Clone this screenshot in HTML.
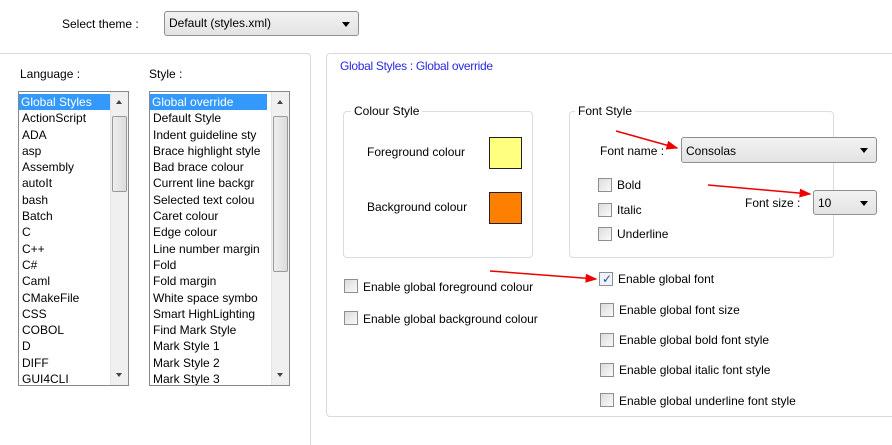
<!DOCTYPE html>
<html style="width:892px;height:445px;overflow:hidden"><head><style>
*{margin:0;padding:0;box-sizing:border-box}
body{width:892px;height:445px;background:#fff;font-family:"Liberation Sans",sans-serif;font-size:12px;color:#000;position:relative;overflow:hidden}
.a{position:absolute;white-space:nowrap}
.combo{position:absolute;border:1px solid #8e8f8f;border-radius:3px;background:linear-gradient(#f2f2f2,#e3e3e3);padding:4px 4px 0 4px}
.combo:after{content:"";position:absolute;right:8px;top:50%;margin-top:-2px;border-left:4px solid transparent;border-right:4px solid transparent;border-top:5px solid #000}
.list{position:absolute;border:1px solid #828790;background:#fff;overflow:hidden;padding-top:2px}
.list .it{height:16.3px;line-height:16px;padding-left:3px}
.sel{background:#3399ff;color:#fff}
.sb{position:absolute;right:0;top:0;bottom:0;width:18px;background:#f0f0f0;border-left:1px solid #e4e4e4}
.thumb{position:absolute;left:1px;right:1px;border:1px solid #9a9a9a;border-radius:2px;background:linear-gradient(90deg,#eee,#dcdcdc)}
.arr{position:absolute;left:5px;width:0;height:0;border-left:3px solid transparent;border-right:3px solid transparent}
.grp{position:absolute;border:1px solid #d5dfe5;border-radius:4px}
.cb{position:absolute;width:14px;height:14px;border:1px solid #8f8f8f;background:linear-gradient(135deg,#dcdcdc,#fafafa)}
.legend{position:absolute;background:#fff;padding:0 3px}
</style></head><body>
<div class="a" style="left:62px;top:17px">Select theme :</div>
<div class="combo" style="left:164px;top:11px;width:195px;height:25px">Default (styles.xml)</div>

<div style="position:absolute;left:-5px;top:53px;width:316px;height:392px;border:1px solid #dadada;border-bottom:none;border-radius:4px 4px 0 0"></div>
<div class="a" style="left:20px;top:67px">Language :</div>
<div class="a" style="left:149px;top:67px">Style :</div>

<div class="list" style="left:18px;top:91px;width:111px;height:295px">
<div class="it sel" style="margin-right:18px;padding-left:2px">Global Styles</div>
<div class="it">ActionScript</div><div class="it">ADA</div><div class="it">asp</div><div class="it">Assembly</div><div class="it">autoIt</div><div class="it">bash</div><div class="it">Batch</div><div class="it">C</div><div class="it">C++</div><div class="it">C#</div><div class="it">Caml</div><div class="it">CMakeFile</div><div class="it">CSS</div><div class="it">COBOL</div><div class="it">D</div><div class="it">DIFF</div><div class="it">GUI4CLI</div>
<div class="sb"><div class="arr" style="top:8px;border-bottom:4px solid #444"></div><div class="thumb" style="top:24px;height:76px"></div><div class="arr" style="bottom:8px;border-top:4px solid #444"></div></div>
</div>

<div class="list" style="left:149px;top:91px;width:141px;height:295px">
<div class="it sel" style="margin-right:22px;padding-left:2px">Global override</div>
<div class="it">Default Style</div><div class="it">Indent guideline sty</div><div class="it">Brace highlight style</div><div class="it">Bad brace colour</div><div class="it">Current line backgr</div><div class="it">Selected text colou</div><div class="it">Caret colour</div><div class="it">Edge colour</div><div class="it">Line number margin</div><div class="it">Fold</div><div class="it">Fold margin</div><div class="it">White space symbo</div><div class="it">Smart HighLighting</div><div class="it">Find Mark Style</div><div class="it">Mark Style 1</div><div class="it">Mark Style 2</div><div class="it">Mark Style 3</div>
<div class="sb"><div class="arr" style="top:8px;border-bottom:4px solid #444"></div><div class="thumb" style="top:24px;height:156px"></div><div class="arr" style="bottom:8px;border-top:4px solid #444"></div></div>
</div>

<div style="position:absolute;left:326px;top:53px;width:600px;height:364px;border:1px solid #dadada;border-radius:4px"></div>
<div class="a" style="left:340px;top:59px;color:#2a2ae0;letter-spacing:-0.3px">Global Styles : Global override</div>

<div class="grp" style="left:343px;top:111px;width:190px;height:147px"></div>
<div class="legend" style="left:351px;top:104px">Colour Style</div>
<div class="a" style="left:367px;top:145px">Foreground colour</div>
<div style="position:absolute;left:489px;top:137px;width:33px;height:32px;border:1px solid #222;background:#ffff80"></div>
<div class="a" style="left:367px;top:200px">Background colour</div>
<div style="position:absolute;left:489px;top:192px;width:33px;height:32px;border:1px solid #222;background:#ff8000"></div>

<div class="grp" style="left:569px;top:111px;width:265px;height:147px"></div>
<div class="legend" style="left:575px;top:104px">Font Style</div>
<div class="a" style="left:600px;top:144px">Font name :</div>
<div class="combo" style="left:681px;top:137px;width:196px;height:26px;padding-top:6px">Consolas</div>
<div class="cb" style="left:598px;top:178px"></div><div class="a" style="left:617px;top:178px">Bold</div>
<div class="cb" style="left:598px;top:203px"></div><div class="a" style="left:617px;top:203px">Italic</div>
<div class="cb" style="left:598px;top:227px"></div><div class="a" style="left:617px;top:227px">Underline</div>
<div class="a" style="left:745px;top:196px">Font size :</div>
<div class="combo" style="left:813px;top:190px;width:64px;height:25px;padding-top:5px">10</div>

<div class="cb" style="left:344px;top:279px"></div><div class="a" style="left:363px;top:280px">Enable global foreground colour</div>
<div class="cb" style="left:344px;top:311px"></div><div class="a" style="left:363px;top:312px">Enable global background colour</div>

<div class="cb" style="left:599px;top:272px;background:#eef2fb"><span class="a" style="left:2px;top:-1px;color:#2b4f9e;font-size:12px">✓</span></div><div class="a" style="left:618px;top:272px">Enable global font</div>
<div class="cb" style="left:600px;top:303px"></div><div class="a" style="left:619px;top:303px">Enable global font size</div>
<div class="cb" style="left:600px;top:333px"></div><div class="a" style="left:619px;top:333px">Enable global bold font style</div>
<div class="cb" style="left:600px;top:363px"></div><div class="a" style="left:619px;top:363px">Enable global italic font style</div>
<div class="cb" style="left:600px;top:393px"></div><div class="a" style="left:619px;top:394px">Enable global underline font style</div>

<svg style="position:absolute;left:0;top:0" width="892" height="445">
<defs><marker id="m" markerWidth="8" markerHeight="6" refX="7" refY="3" orient="auto"><path d="M0,0L8,3L0,6z" fill="#e00"/></marker></defs>
<g stroke="#e00" stroke-width="1.5" fill="none" marker-end="url(#m)">
<line x1="616" y1="131" x2="677" y2="148"/>
<line x1="708" y1="185" x2="810" y2="194"/>
<line x1="490" y1="271" x2="596" y2="279"/>
</g></svg>
</body></html>
